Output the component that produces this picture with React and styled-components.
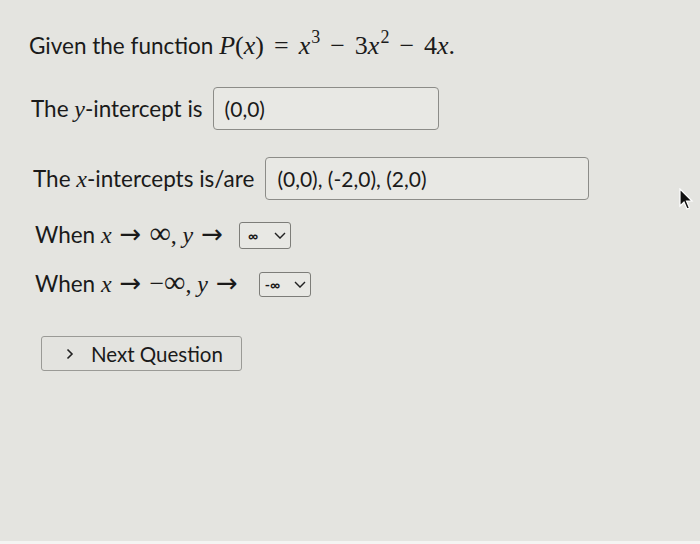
import React from "react";
import styled, { createGlobalStyle } from "styled-components";

const Global = createGlobalStyle`
  html, body { margin: 0; padding: 0; background: #e4e4e0; }
  body { font-family: Lato, "Open Sans", sans-serif; color: #1a1a1a; }
`;

const Page = styled.div`
  width: 700px;
  height: 541px;
  background: #e4e4e0;
  border-bottom: 3px solid #f4f4f2;
  display: flex;
  flex-direction: column;
  position: relative;
  overflow: hidden;
`;

const Row = styled.div`
  display: flex;
  align-items: center;
  gap: ${(p) => p.$gap ?? 8}px;
  margin-top: ${(p) => p.$top}px;
  padding-left: ${(p) => p.$left}px;
  height: ${(p) => p.$h}px;
  font-size: 22.5px;
  white-space: nowrap;
`;

const Label = styled.span`
  display: inline-block;
  position: relative;
  top: ${(p) => p.$dy ?? 0}px;
`;

const M = styled.span`
  font-family: "Liberation Serif", "DejaVu Serif", serif;
  font-style: ${(p) => (p.$up ? "normal" : "italic")};
  font-size: ${(p) => p.$fs ?? 26}px;
  margin: 0 ${(p) => p.$m ?? 0}px;
`;

const Sym = styled.span`
  font-family: "DejaVu Sans", sans-serif;
  font-size: ${(p) => p.$fs ?? 26}px;
  margin: 0 ${(p) => p.$m ?? 0}px;
`;

const Sup = styled.span`
  font-family: "Liberation Serif", serif;
  font-size: 18px;
  position: relative;
  top: -11px;
  margin-left: 1px;
`;

const InputBox = styled.div`
  box-sizing: border-box;
  width: ${(p) => p.$w}px;
  height: 43px;
  border: 1px solid #8c8c88;
  border-radius: 4px;
  background: #e8e8e4;
  display: flex;
  align-items: center;
  padding-left: 11px;
  font-size: 21px;
`;

const Select = styled.div`
  box-sizing: border-box;
  width: 52px;
  height: ${(p) => p.$h}px;
  border: 1.5px solid #7d7d79;
  border-radius: 3px;
  background: #e8e8e4;
  display: flex;
  align-items: center;
  justify-content: space-between;
  padding: 0 4px 0 ${(p) => p.$pl}px;
  font-size: 14px;
  font-weight: 700;
`;

const Button = styled.div`
  box-sizing: border-box;
  width: 201px;
  height: 35px;
  border: 1px solid #9a9a96;
  border-radius: 3px;
  background: #e3e3df;
  display: flex;
  align-items: center;
  gap: 17px;
  padding-left: 24px;
  font-size: 20.5px;
  margin-top: 39px;
  margin-left: 41px;
`;

const Cursor = styled.svg`
  position: absolute;
  left: 678px;
  top: 188px;
`;

const Chevron = ({ size = 12 }) => (
  <svg width={size} height={size * 0.6} viewBox="0 0 12 7">
    <path d="M1 1 L6 6 L11 1" fill="none" stroke="#222" strokeWidth="1.4" />
  </svg>
);

export default function App() {
  return (
    <>
      <Global />
      <Page>
        <Row $top={31} $left={29} $h={30}>
          <Label>
            Given the function&nbsp;
            <M>P</M>
            <M $up>(</M>
            <M>x</M>
            <M $up>)</M>
            <M $up $m={10}>=</M>
            <M>x</M>
            <Sup>3</Sup>
            <M $up $m={10}>−</M>
            <M $up>3</M>
            <M>x</M>
            <Sup>2</Sup>
            <M $up $m={10}>−</M>
            <M $up>4</M>
            <M>x</M>
            <M $up>.</M>
          </Label>
        </Row>
        <Row $top={26} $left={31} $h={43} $gap={10}>
          <Label>
            The <M $fs={24}>y</M>-intercept is
          </Label>
          <InputBox $w={226}>(0,0)</InputBox>
        </Row>
        <Row $top={27} $left={33} $h={43} $gap={11}>
          <Label>
            The <M $fs={24}>x</M>-intercepts is/are
          </Label>
          <InputBox $w={324}>(0,0), (-2,0), (2,0)</InputBox>
        </Row>
        <Row $top={22} $left={35} $h={27} $gap={8}>
          <Label $dy={-3}>
            When <M $fs={24}>x</M>
            <Sym $m={8}>→</Sym>
            <M $up $fs={30}>∞</M>
            <M $up $fs={24}>,</M> <M $fs={24}>y</M>
            <Sym $m={8}>→</Sym>
          </Label>
          <Select $h={27} $pl={8}>
            <span>∞</span>
            <Chevron />
          </Select>
        </Row>
        <Row $top={23} $left={35} $h={25} $gap={13}>
          <Label $dy={-3}>
            When <M $fs={24}>x</M>
            <Sym $m={8}>→</Sym>
            <M $up $fs={26}>−</M>
            <M $up $fs={30}>∞</M>
            <M $up $fs={24}>,</M> <M $fs={24}>y</M>
            <Sym $m={8}>→</Sym>
          </Label>
          <Select $h={25} $pl={5}>
            <span>-∞</span>
            <Chevron />
          </Select>
        </Row>
        <Button>
          <svg width="8" height="12" viewBox="0 0 8 12">
            <path d="M1.5 1.5 L6 6 L1.5 10.5" fill="none" stroke="#222" strokeWidth="1.6" />
          </svg>
          <span>Next Question</span>
        </Button>
        <Cursor width="16" height="24" viewBox="0 0 16 24">
          <path d="M2 1 L2 18 L6 14 L9 21 L11.5 20 L8.5 13 L14 13 Z" fill="#111" stroke="#fff" strokeWidth="1.2" />
        </Cursor>
      </Page>
    </>
  );
}
